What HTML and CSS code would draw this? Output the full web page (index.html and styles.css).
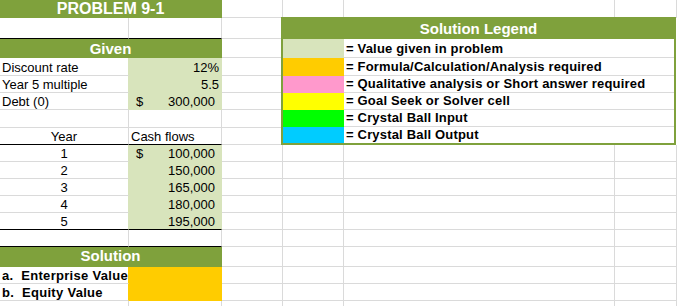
FILE: index.html
```html
<!DOCTYPE html>
<html>
<head>
<meta charset="utf-8">
<title>Problem 9-1</title>
<link rel="stylesheet" href="styles.css">
</head>
<body>
<div class="sheet">
  <!-- row 1 -->
  <div class="c band title span2">PROBLEM 9-1</div>
  <div class="c"></div><div class="c"></div><div class="c"></div><div class="c"></div>

  <!-- legend (merged block D2:F8) -->
  <div class="legend">
    <div class="lg-head">Solution Legend</div>
    <div class="sw sw-given"></div><div class="lg-text">= Value given in problem</div>
    <div class="sw sw-formula"></div><div class="lg-text">= Formula/Calculation/Analysis required</div>
    <div class="sw sw-qual"></div><div class="lg-text">= Qualitative analysis or Short answer required</div>
    <div class="sw sw-goal"></div><div class="lg-text">= Goal Seek or Solver cell</div>
    <div class="sw sw-input"></div><div class="lg-text">= Crystal Ball Input</div>
    <div class="sw sw-output"></div><div class="lg-text last">= Crystal Ball Output</div>
  </div>

  <!-- row 2 -->
  <div class="c rule"></div><div class="c rule"></div><div class="c"></div>
  <!-- row 3 -->
  <div class="c band sub span2">Given</div><div class="c"></div>
  <!-- row 4 -->
  <div class="c edge-given">Discount rate</div><div class="c given right">12%</div><div class="c"></div>
  <!-- row 5 -->
  <div class="c edge-given">Year 5 multiple</div><div class="c given right">5.5</div><div class="c"></div>
  <!-- row 6 -->
  <div class="c edge-given">Debt (0)</div><div class="c given acct"><span>$</span><span>300,000</span></div><div class="c"></div>
  <!-- row 7 -->
  <div class="c"></div><div class="c"></div><div class="c"></div>
  <!-- row 8 -->
  <div class="c rule center">Year</div><div class="c rule">Cash flows</div><div class="c"></div>
  <!-- row 9 -->
  <div class="c center edge-given">1</div><div class="c given acct"><span>$</span><span>100,000</span></div>
  <div class="c"></div><div class="c"></div><div class="c"></div><div class="c"></div>
  <!-- row 10 -->
  <div class="c center edge-given">2</div><div class="c given acct"><span></span><span>150,000</span></div>
  <div class="c"></div><div class="c"></div><div class="c"></div><div class="c"></div>
  <!-- row 11 -->
  <div class="c center edge-given">3</div><div class="c given acct"><span></span><span>165,000</span></div>
  <div class="c"></div><div class="c"></div><div class="c"></div><div class="c"></div>
  <!-- row 12 -->
  <div class="c center edge-given">4</div><div class="c given acct"><span></span><span>180,000</span></div>
  <div class="c"></div><div class="c"></div><div class="c"></div><div class="c"></div>
  <!-- row 13 -->
  <div class="c center edge-given rule">5</div><div class="c given acct rule"><span></span><span>195,000</span></div>
  <div class="c"></div><div class="c"></div><div class="c"></div><div class="c"></div>
  <!-- row 14 -->
  <div class="c rule"></div><div class="c rule"></div>
  <div class="c"></div><div class="c"></div><div class="c"></div><div class="c"></div>
  <!-- row 15 -->
  <div class="c band sub sol span2">Solution</div>
  <div class="c"></div><div class="c"></div><div class="c"></div><div class="c"></div>
  <!-- row 16 -->
  <div class="c bold edge-formula">a.&nbsp; Enterprise Value</div><div class="c formula"></div>
  <div class="c"></div><div class="c"></div><div class="c"></div><div class="c"></div>
  <!-- row 17 -->
  <div class="c bold edge-formula">b.&nbsp; Equity Value</div><div class="c formula"></div>
  <div class="c"></div><div class="c"></div><div class="c"></div><div class="c"></div>
  <!-- row 18 -->
  <div class="c"></div><div class="c"></div><div class="c"></div>
  <div class="c"></div><div class="c"></div><div class="c"></div>
</div>
</body>
</html>
```

FILE: styles.css
```css
html, body {
  margin: 0;
  padding: 0;
  background: #ffffff;
  overflow: hidden;
}

.sheet {
  display: grid;
  grid-template-columns: 129px 93px 61px 61px 271px 62px;
  grid-template-rows: 18px 21px 19px 18px 17px 17px 18px 17px 17px 17px 17px 17px 17px 17px 20px 17px 17px 17px;
  width: 677px;
  font-family: "Liberation Sans", Arial, sans-serif;
  font-size: 13px;
  line-height: 15px;
  color: #000000;
}

.c {
  box-sizing: border-box;
  border-right: 1px solid #dadada;
  border-bottom: 1px solid #dadada;
  display: flex;
  align-items: flex-end;
  padding: 0 2px;
  white-space: nowrap;
  min-width: 0;
}

.span2 { grid-column: span 2; }
.center { justify-content: center; }
.right { justify-content: flex-end; }
.bold { font-weight: bold; letter-spacing: 0.3px; }

.rule { border-bottom-color: #000000; }

/* green header bands */
.band {
  background: #7fa13c;
  border-color: #7fa13c;
  color: #ffffff;
  font-weight: bold;
  justify-content: center;
}
.title {
  font-size: 16px;
  line-height: 16px;
}
.sub {
  font-size: 15px;
  line-height: 17px;
}
.sol { padding-bottom: 2px; }

/* fills */
.given {
  background: #d8e4bc;
  border-right-color: #d8e4bc;
  border-bottom-color: #d8e4bc;
}
.given.rule { border-bottom-color: #000000; }
.edge-given { border-right-color: #d8e4bc; }

.formula {
  background: #ffcc00;
  border-color: #ffcc00;
}
.edge-formula { border-right-color: #ffcc00; }

.acct {
  justify-content: space-between;
  padding: 0 6px 0 7px;
}

/* legend block */
.legend {
  grid-column: 4 / 7;
  grid-row: 2 / 9;
  z-index: 1;
  margin: -1px 1px 0 -2px;
  border: 2px solid #7fa13c;
  border-top: 0;
  background: #ffffff;
  display: grid;
  grid-template-columns: 61px 1fr;
  grid-template-rows: 22px 19px 18px 17px 17px 17px 16px;
}
.lg-head {
  grid-column: 1 / 3;
  background: #7fa13c;
  color: #ffffff;
  font-weight: bold;
  font-size: 15px;
  line-height: 17px;
  display: flex;
  align-items: center;
  justify-content: center;
}
.lg-text {
  box-sizing: border-box;
  border-bottom: 1px solid #dadada;
  display: flex;
  align-items: flex-end;
  padding: 0 0 1px 2px;
  font-weight: bold;
  letter-spacing: 0.18px;
  white-space: nowrap;
}
.lg-text.last { border-bottom: 0; }

.sw-given { background: #d8e4bc; }
.sw-formula { background: #ffcc00; }
.sw-qual { background: #ff99cc; }
.sw-goal { background: #ffff00; }
.sw-input { background: #00ff00; }
.sw-output { background: #00ccff; }
```
